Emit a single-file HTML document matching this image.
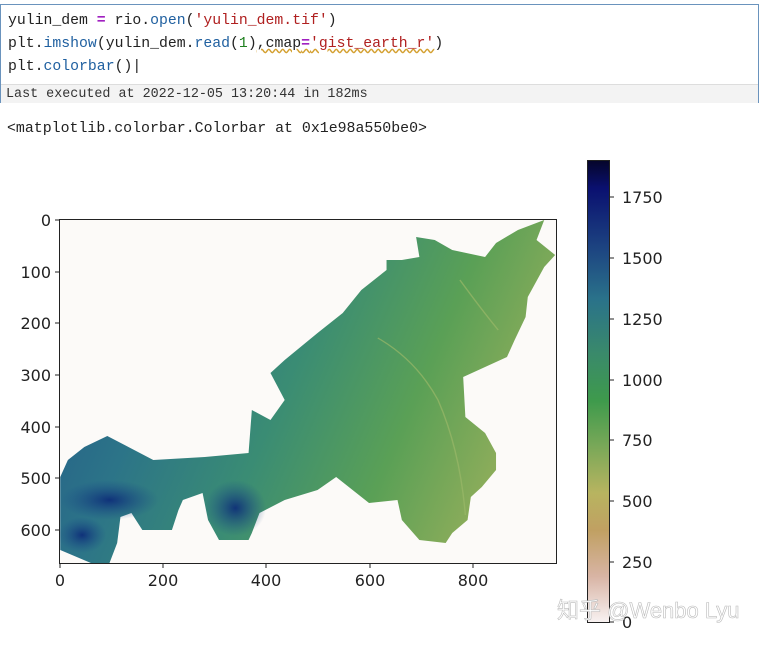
<!DOCTYPE html>
<html><head><meta charset="utf-8"><style>
body{margin:0;width:762px;height:645px;background:#fff;position:relative;overflow:hidden;font-family:"Liberation Mono",monospace;}
.cell{position:absolute;left:0;top:4px;width:759px;height:99px;border:1px solid #6a93bd;box-sizing:border-box;}
.code{position:absolute;left:7px;top:5px;font-size:14.8px;line-height:23px;color:#222;white-space:pre;}
.status{position:absolute;left:0;top:79px;width:757px;height:19px;background:#f3f3f3;border-top:1px solid #ddd;font-size:13.4px;line-height:19px;color:#333;padding-left:5px;box-sizing:border-box;}
.out{position:absolute;left:7px;top:121px;font-size:14.9px;color:#222;white-space:pre;}
.k{color:#a020c0;font-weight:bold}.f{color:#2060a0}.s{color:#b02020}.n{color:#208020}
.u{text-decoration:underline wavy #d4a030;}
</style></head><body>
<div class="cell">
<div class="code">yulin_dem <span class="k">=</span> rio.<span class="f">open</span>(<span class="s">'yulin_dem.tif'</span>)
plt.<span class="f">imshow</span>(yulin_dem.<span class="f">read</span>(<span class="n">1</span>)<span class="u">,cmap<span class="k">=</span><span class="s">'gist_earth_r'</span></span>)
plt.<span class="f">colorbar</span>()|</div>
<div class="status">Last executed at 2022-12-05 13:20:44 in 182ms</div>
</div>
<div class="out">&lt;matplotlib.colorbar.Colorbar at 0x1e98a550be0&gt;</div>
<svg width="762" height="645" style="position:absolute;left:0;top:0" font-family="DejaVu Sans, Liberation Sans, sans-serif" font-size="16" fill="#222">
<defs>
<linearGradient id="m" x1="0" y1="0" x2="1" y2="0.3">
<stop offset="0" stop-color="#22568a"/>
<stop offset="0.3" stop-color="#2c7488"/>
<stop offset="0.55" stop-color="#3a8c74"/>
<stop offset="0.8" stop-color="#5aa056"/>
<stop offset="1" stop-color="#8aac5a"/>
</linearGradient>
<radialGradient id="d" cx="0.5" cy="0.5" r="0.5">
<stop offset="0" stop-color="#0c2a78" stop-opacity="0.9"/>
<stop offset="1" stop-color="#1a4a86" stop-opacity="0"/>
</radialGradient>
<linearGradient id="c" x1="0" y1="0" x2="0" y2="1">
<stop offset="0" stop-color="#05052a"/>
<stop offset="0.06" stop-color="#0a1070"/>
<stop offset="0.2" stop-color="#1e4882"/>
<stop offset="0.3" stop-color="#2a728a"/>
<stop offset="0.42" stop-color="#3a8a6a"/>
<stop offset="0.52" stop-color="#3e9a4c"/>
<stop offset="0.62" stop-color="#7aa858"/>
<stop offset="0.72" stop-color="#b8b460"/>
<stop offset="0.8" stop-color="#c0a062"/>
<stop offset="0.9" stop-color="#d8b4a4"/>
<stop offset="1" stop-color="#f8f2f2"/>
</linearGradient>
<clipPath id="ax"><rect x="59" y="219" width="497" height="344"/></clipPath>
</defs>
<rect x="59" y="219" width="497" height="344" fill="#fcfaf8"/>
<g clip-path="url(#ax)">
<g transform="scale(1.095,1)">
<polygon fill="url(#m)" points="497,220 490,240 507,255 497,267 482,297 480,317 470,340 463,357 423,377 425,417 443,433 453,453 453,470 440,487 430,497 427,520 413,533 407,543 383,540 367,520 363,500 337,503 307,477 290,490 260,500 237,513 230,533 227,540 200,540 190,520 185,493 167,500 163,510 157,530 130,530 120,513 110,517 107,543 100,563 83,563 55,550 55,477 62,460 77,447 98,436 140,460 187,457 227,453 230,410 247,420 260,400 247,373 260,360 290,333 313,313 330,290 353,270 353,260 367,260 383,257 380,237 397,240 413,250 443,257 453,243 473,230"/>
<ellipse cx="100" cy="500" rx="45" ry="20" fill="url(#d)"/>
<ellipse cx="215" cy="508" rx="28" ry="28" fill="url(#d)"/>
<ellipse cx="75" cy="535" rx="22" ry="18" fill="url(#d)"/>
<path d="M345 338 Q380 360 400 400 Q420 450 425 515 M420 280 Q440 310 455 330" stroke="#9ab868" stroke-width="1.3" fill="none" opacity="0.7"/>
</g></g>
<rect x="59.5" y="219.5" width="497" height="344" fill="none" stroke="#222" stroke-width="1"/>
<g stroke="#222"><line x1="55" y1="220" x2="59" y2="220"/><line x1="55" y1="272" x2="59" y2="272"/><line x1="55" y1="323" x2="59" y2="323"/><line x1="55" y1="375" x2="59" y2="375"/><line x1="55" y1="427" x2="59" y2="427"/><line x1="55" y1="478" x2="59" y2="478"/><line x1="55" y1="530" x2="59" y2="530"/>
<line x1="60" y1="564" x2="60" y2="568"/><line x1="163" y1="564" x2="163" y2="568"/><line x1="266" y1="564" x2="266" y2="568"/><line x1="370" y1="564" x2="370" y2="568"/><line x1="473" y1="564" x2="473" y2="568"/></g>
<g text-anchor="end"><text x="51" y="226">0</text><text x="51" y="278">100</text><text x="51" y="329">200</text><text x="51" y="381">300</text><text x="51" y="433">400</text><text x="51" y="484">500</text><text x="51" y="536">600</text></g>
<g text-anchor="middle"><text x="60" y="586">0</text><text x="163" y="586">200</text><text x="266" y="586">400</text><text x="370" y="586">600</text><text x="473" y="586">800</text></g>
<rect x="587.5" y="160.5" width="22" height="462" fill="url(#c)" stroke="#222"/>
<g stroke="#222"><line x1="610" y1="197" x2="614" y2="197"/><line x1="610" y1="258" x2="614" y2="258"/><line x1="610" y1="319" x2="614" y2="319"/><line x1="610" y1="380" x2="614" y2="380"/><line x1="610" y1="440" x2="614" y2="440"/><line x1="610" y1="501" x2="614" y2="501"/><line x1="610" y1="562" x2="614" y2="562"/><line x1="610" y1="622" x2="614" y2="622"/></g>
<g><text x="622" y="203">1750</text><text x="622" y="264">1500</text><text x="622" y="325">1250</text><text x="622" y="386">1000</text><text x="622" y="446">750</text><text x="622" y="507">500</text><text x="622" y="568">250</text><text x="622" y="628">0</text></g>
<text x="557" y="618" font-size="22" fill="#fff" stroke="#bbb" stroke-width="0.6" font-family="Liberation Sans, Noto Sans CJK SC, sans-serif">知乎 @Wenbo Lyu</text>
</svg>
</body></html>
